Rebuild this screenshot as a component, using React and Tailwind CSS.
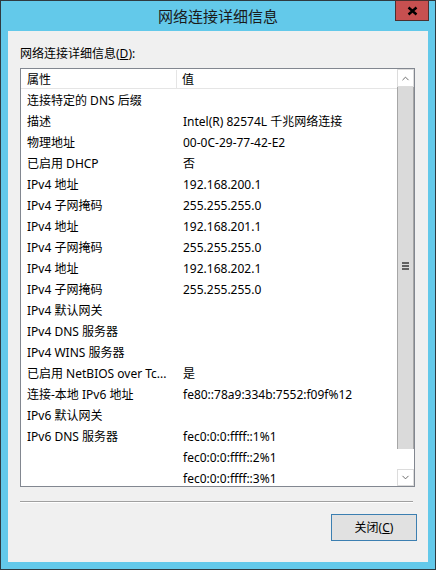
import { ChevronUp, ChevronDown } from 'lucide-react';

const rows = [
  ['连接特定的 DNS 后缀', ''],
  ['描述', 'Intel(R) 82574L 千兆网络连接'],
  ['物理地址', '00-0C-29-77-42-E2'],
  ['已启用 DHCP', '否'],
  ['IPv4 地址', '192.168.200.1'],
  ['IPv4 子网掩码', '255.255.255.0'],
  ['IPv4 地址', '192.168.201.1'],
  ['IPv4 子网掩码', '255.255.255.0'],
  ['IPv4 地址', '192.168.202.1'],
  ['IPv4 子网掩码', '255.255.255.0'],
  ['IPv4 默认网关', ''],
  ['IPv4 DNS 服务器', ''],
  ['IPv4 WINS 服务器', ''],
  ['已启用 NetBIOS over Tc...', '是'],
  ['连接-本地 IPv6 地址', 'fe80::78a9:334b:7552:f09f%12'],
  ['IPv6 默认网关', ''],
  ['IPv6 DNS 服务器', 'fec0:0:0:ffff::1%1'],
  ['', 'fec0:0:0:ffff::2%1'],
  ['', 'fec0:0:0:ffff::3%1'],
];

export default function App() {
  return (
    <div
      className="w-[436px] h-[570px] bg-[#63c9ea] border border-[#2f3a40] flex flex-col text-[12px] text-black"
      style={{ fontFamily: '"Noto Sans", "Noto Sans CJK SC", sans-serif' }}
    >
      {/* Title bar */}
      <div className="relative h-[30px] flex items-center justify-center shrink-0">
        <span className="text-[15px] text-[#1a1a1a] mt-[1px]">网络连接详细信息</span>
        <button className="absolute right-[6px] top-[-1px] w-[34px] h-[21px] bg-[#c75050] border border-[#4b3030] flex items-center justify-center">
          <svg width="11" height="10" viewBox="0 0 11 10">
            <path d="M1.5 1.5 L9.5 8.5 M9.5 1.5 L1.5 8.5" stroke="#000" strokeWidth="2.4" />
          </svg>
        </button>
      </div>

      {/* Client area */}
      <div className="mx-[7px] mb-[7px] flex-1 bg-[#f0f0f0] flex flex-col px-[12px]">
        <div className="mt-[15px] h-[16px] leading-[16px]">
          网络连接详细信息(<span className="underline">D</span>):
        </div>

        <div className="mt-[6px] w-[395px] h-[419px] border border-[#828790] bg-white flex">
          <div className="flex-1 flex flex-col overflow-hidden">
            <div className="h-[20px] flex border-b border-[#e5e5e5] shrink-0 pt-[1px]">
              <div className="w-[156px] border-r border-[#e5e5e5] pl-[6px] leading-[19px]">属性</div>
              <div className="flex-1 pl-[5px] leading-[19px]">值</div>
            </div>
            {rows.map(([k, v], i) => (
              <div
                key={i}
                className={`${i === rows.length - 1 ? 'h-[19px]' : 'h-[21px]'} shrink-0 flex whitespace-nowrap pt-[5px] leading-[14px]`}
              >
                <div className="w-[156px] pl-[6px]">{k}</div>
                <div className="pl-[6px]">{v}</div>
              </div>
            ))}
          </div>

          {/* Scrollbar */}
          <div className="w-[17px] flex flex-col bg-white">
            <div className="h-[18px] border border-[#dcdcdc] flex items-center justify-center">
              <ChevronUp className="w-[11px] h-[11px] text-[#606060]" strokeWidth={2} />
            </div>
            <div className="h-[362px] bg-[#dadada] border-x border-[#a6a6a6] flex items-center justify-center">
              <div className="flex flex-col gap-[1px] mt-[-4px]">
                <div className="w-[7px] h-[2px] bg-[#606060]" />
                <div className="w-[7px] h-[2px] bg-[#606060]" />
                <div className="w-[7px] h-[2px] bg-[#606060]" />
              </div>
            </div>
            <div className="flex-1 bg-white" />
            <div className="h-[17px] border border-[#dcdcdc] flex items-center justify-center">
              <ChevronDown className="w-[11px] h-[11px] text-[#606060]" strokeWidth={2} />
            </div>
          </div>
        </div>

        <div className="mt-[14px] w-[393px] h-[2px] border-t border-[#a0a0a0] border-b border-b-white" />

        <div className="mt-[11px] flex justify-end mr-[-1px]">
          <button className="w-[86px] h-[27px] bg-[#e1e1e1] border border-[#3c7fb1] flex items-center justify-center">
            关闭(<span className="underline">C</span>)
          </button>
        </div>
      </div>
    </div>
  );
}
